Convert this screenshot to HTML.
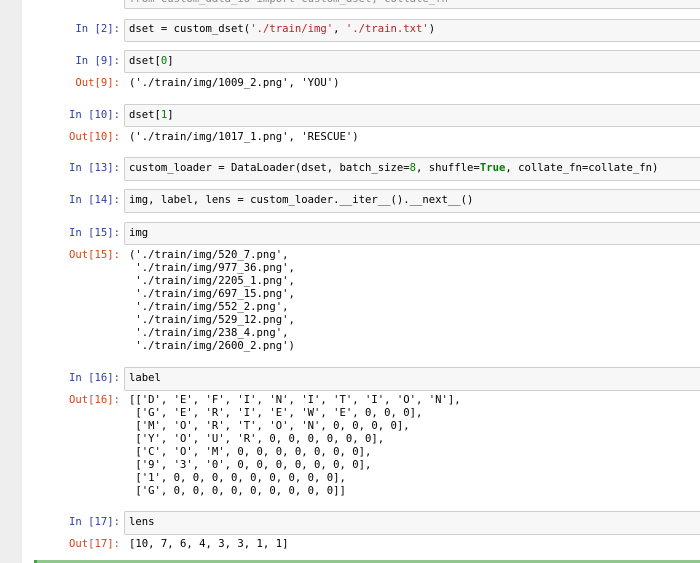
<!DOCTYPE html><html><head><style>
body{margin:0;width:700px;height:563px;overflow:hidden;background:#eee;font-family:"DejaVu Sans Mono","Liberation Mono",monospace;font-size:10.6px;position:relative}
.page{position:absolute;left:22px;top:0;width:700px;height:563px;background:#fff}
.box{position:absolute;left:124px;width:600px;background:#f7f7f7;border:1px solid #cfcfcf;border-radius:2px}
.t{position:absolute;white-space:pre;line-height:13px;color:#000}
.p{position:absolute;white-space:pre;line-height:13px;text-align:right;right:580px}
.in{color:#303f9f}.out{color:#d84315}
.s{color:#ba2121}.n{color:#008000}.k{color:#008000;font-weight:bold}
</style></head><body><div class="page"></div>
<div class="box" style="top:-10px;height:17px"></div>
<div class="t" style="left:129px;top:-7px;color:#888">from custom_data_io import custom_dset, collate_fn</div>

<div class="box" style="top:19px;height:21px"></div>
<div class="p in" style="top:23px">In [2]:</div>
<div class="t" style="left:129px;top:23px">dset = custom_dset(<span class="s">'./train/img'</span>, <span class="s">'./train.txt'</span>)</div>

<div class="box" style="top:50px;height:21px"></div>
<div class="p in" style="top:55px">In [9]:</div>
<div class="t" style="left:129px;top:55px">dset[<span class="n">0</span>]</div>
<div class="p out" style="top:77px">Out[9]:</div>
<div class="t" style="left:129px;top:77px">('./train/img/1009_2.png', 'YOU')</div>

<div class="box" style="top:104px;height:21px"></div>
<div class="p in" style="top:109px">In [10]:</div>
<div class="t" style="left:129px;top:109px">dset[<span class="n">1</span>]</div>
<div class="p out" style="top:131px">Out[10]:</div>
<div class="t" style="left:129px;top:131px">('./train/img/1017_1.png', 'RESCUE')</div>

<div class="box" style="top:157px;height:22px"></div>
<div class="p in" style="top:162px">In [13]:</div>
<div class="t" style="left:129px;top:162px">custom_loader = DataLoader(dset, batch_size=<span class="n">8</span>, shuffle=<span class="k">True</span>, collate_fn=collate_fn)</div>

<div class="box" style="top:189px;height:22px"></div>
<div class="p in" style="top:194px">In [14]:</div>
<div class="t" style="left:129px;top:194px">img, label, lens = custom_loader.__iter__().__next__()</div>

<div class="box" style="top:222px;height:21px"></div>
<div class="p in" style="top:227px">In [15]:</div>
<div class="t" style="left:129px;top:227px">img</div>
<div class="p out" style="top:249px">Out[15]:</div>
<div class="t" style="left:129px;top:249px">('./train/img/520_7.png',
 './train/img/977_36.png',
 './train/img/2205_1.png',
 './train/img/697_15.png',
 './train/img/552_2.png',
 './train/img/529_12.png',
 './train/img/238_4.png',
 './train/img/2600_2.png')</div>

<div class="box" style="top:367px;height:22px"></div>
<div class="p in" style="top:372px">In [16]:</div>
<div class="t" style="left:129px;top:372px">label</div>
<div class="p out" style="top:394px">Out[16]:</div>
<div class="t" style="left:129px;top:394px">[['D', 'E', 'F', 'I', 'N', 'I', 'T', 'I', 'O', 'N'],
 ['G', 'E', 'R', 'I', 'E', 'W', 'E', 0, 0, 0],
 ['M', 'O', 'R', 'T', 'O', 'N', 0, 0, 0, 0],
 ['Y', 'O', 'U', 'R', 0, 0, 0, 0, 0, 0],
 ['C', 'O', 'M', 0, 0, 0, 0, 0, 0, 0],
 ['9', '3', '0', 0, 0, 0, 0, 0, 0, 0],
 ['1', 0, 0, 0, 0, 0, 0, 0, 0, 0],
 ['G', 0, 0, 0, 0, 0, 0, 0, 0, 0]]</div>

<div class="box" style="top:511px;height:22px"></div>
<div class="p in" style="top:516px">In [17]:</div>
<div class="t" style="left:129px;top:516px">lens</div>
<div class="p out" style="top:538px">Out[17]:</div>
<div class="t" style="left:129px;top:538px">[10, 7, 6, 4, 3, 3, 1, 1]</div>
<div style="position:absolute;left:34px;top:560px;width:680px;height:3px;background:#8fc78f;border-left:3px solid #42a542"></div>
</body></html>
